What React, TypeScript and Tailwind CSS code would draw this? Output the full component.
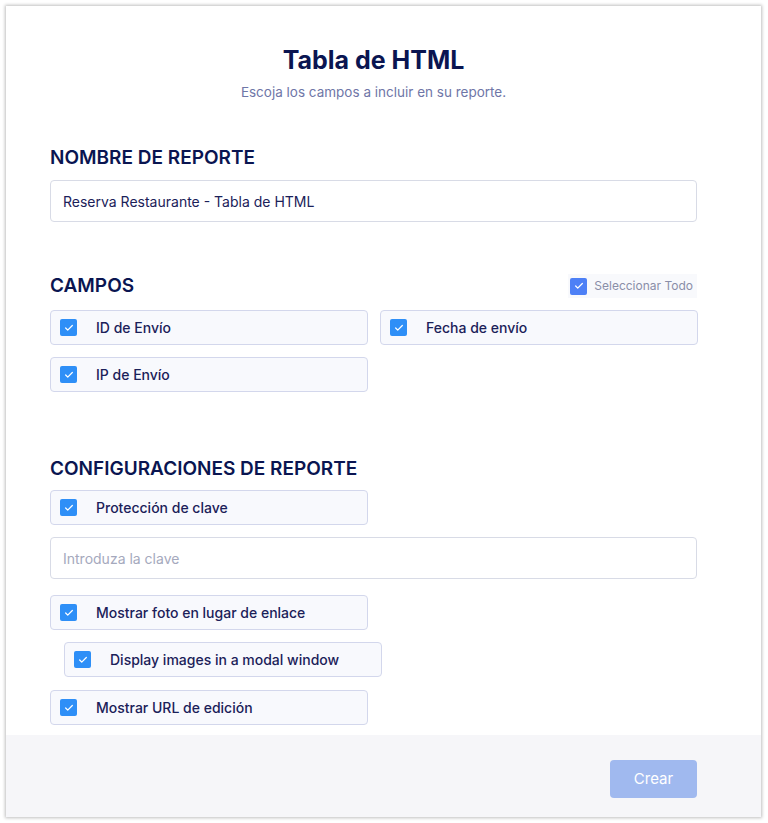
import { Check } from "lucide-react";

const Box = ({ blue = "bg-[#2e8ff7]" }: { blue?: string }) => (
  <span className={`flex h-[17px] w-[17px] shrink-0 items-center justify-center rounded-[2px] ${blue}`}>
    <Check className="h-[10px] w-[10px] text-white" strokeWidth={3} />
  </span>
);

const Option = ({ label, className = "" }: { label: string; className?: string }) => (
  <div
    className={`flex h-[35px] w-[318px] items-center gap-[19px] rounded-[4px] border border-[#d3d7ec] bg-[#f8f9fd] pl-[9px] ${className}`}
  >
    <Box />
    <span className="text-[14px] font-medium text-[#1b2159]">{label}</span>
  </div>
);

const Heading = ({ children, className = "" }: { children: React.ReactNode; className?: string }) => (
  <h2 className={`text-[19px] leading-[24px] font-semibold text-[#0a1551] ${className}`}>{children}</h2>
);

export default function App() {
  return (
    <div className="min-h-screen bg-white p-[6px]" style={{ fontFamily: "Inter, 'Noto Sans', sans-serif" }}>
      <div className="flex h-[811px] w-[755px] flex-col overflow-hidden bg-white shadow-[0_0_3px_1px_rgba(0,0,0,0.25)]">
        <div className="flex-1 pl-[44px] pt-[38px]">
          <div className="w-[647px]">
            <h1 className="text-center text-[25px] leading-[32px] font-bold text-[#0a1551]">Tabla de HTML</h1>
            <p className="mt-[6px] text-center text-[13.5px] leading-[20px] text-[#6f76a7]">
              Escoja los campos a incluir en su reporte.
            </p>

            <Heading className="mt-[44px]">NOMBRE DE REPORTE</Heading>
            <div className="mt-[10px] flex h-[42px] items-center rounded-[4px] border border-[#d8dbe6] bg-white px-[12px] text-[14px] text-[#1b2159]">
              Reserva Restaurante - Tabla de HTML
            </div>

            <div className="mt-[52px] flex items-center justify-between">
              <Heading>CAMPOS</Heading>
              <div className="flex h-[24px] items-center gap-[7px] bg-[#f8f9fc] pl-[2px] pr-[4px]">
                <Box blue="bg-[#4d80f6]" />
                <span className="text-[12px] text-[#8a8ea8]">Seleccionar Todo</span>
              </div>
            </div>
            <div className="mt-[12px] grid grid-cols-[318px_318px] gap-x-[12px] gap-y-[12px]">
              <Option label="ID de Envío" />
              <Option label="Fecha de envío" />
              <Option label="IP de Envío" />
            </div>

            <Heading className="mt-[65px]">CONFIGURACIONES DE REPORTE</Heading>
            <Option label="Protección de clave" className="mt-[9px]" />
            <div className="mt-[12px] flex h-[42px] items-center rounded-[4px] border border-[#d8dbe6] bg-white px-[12px] text-[14px] text-[#a5a9bd]">
              Introduza la clave
            </div>
            <Option label="Mostrar foto en lugar de enlace" className="mt-[16px]" />
            <Option label="Display images in a modal window" className="ml-[14px] mt-[12px]" />
            <Option label="Mostrar URL de edición" className="mt-[13px]" />
          </div>
        </div>
        <div className="flex h-[82px] shrink-0 items-center bg-[#f6f6f9] pl-[604px]">
          <button className="mt-[6px] h-[38px] w-[87px] rounded-[4px] bg-[#a0b9ef] text-[15px] text-white">Crear</button>
        </div>
      </div>
    </div>
  );
}
